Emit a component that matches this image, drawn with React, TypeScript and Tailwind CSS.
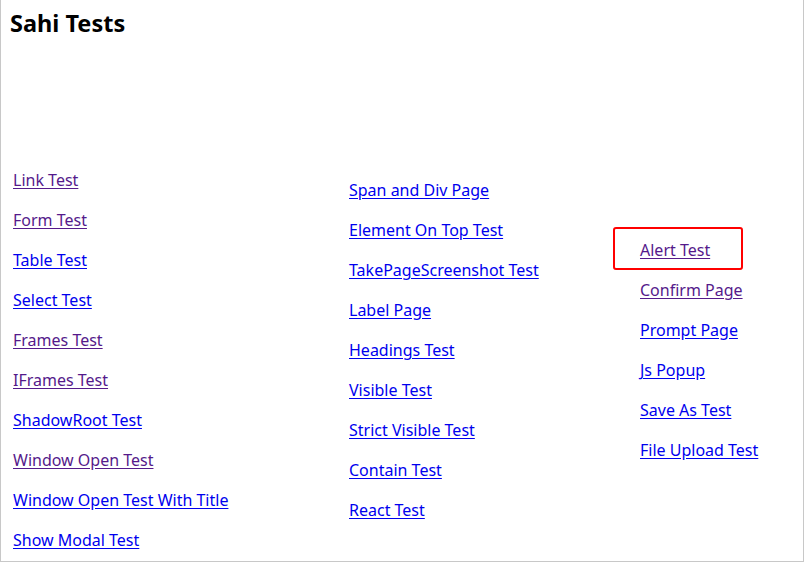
import React from "react";

type L = { t: string; v?: boolean };

const col1: L[] = [
  { t: "Link Test", v: true },
  { t: "Form Test", v: true },
  { t: "Table Test" },
  { t: "Select Test" },
  { t: "Frames Test", v: true },
  { t: "IFrames Test", v: true },
  { t: "ShadowRoot Test" },
  { t: "Window Open Test", v: true },
  { t: "Window Open Test With Title" },
  { t: "Show Modal Test" },
];
const col2: L[] = [
  { t: "Span and Div Page" },
  { t: "Element On Top Test" },
  { t: "TakePageScreenshot Test" },
  { t: "Label Page" },
  { t: "Headings Test" },
  { t: "Visible Test" },
  { t: "Strict Visible Test" },
  { t: "Contain Test" },
  { t: "React Test" },
];
const col3: L[] = [
  { t: "Alert Test", v: true },
  { t: "Confirm Page", v: true },
  { t: "Prompt Page" },
  { t: "Js Popup" },
  { t: "Save As Test" },
  { t: "File Upload Test" },
];

function Item({ l, box }: { l: L; box?: boolean }) {
  return (
    <div className="relative h-[40px] flex items-center">
      {box && (
        <div className="absolute left-[-27px] top-[-3px] w-[130px] h-[43px] border-[2.5px] border-[#ff0000] rounded-[3px]" />
      )}
      <a
        href="#"
        className={
          "underline underline-offset-[2px] whitespace-nowrap leading-[22px] " +
          (l.v ? "text-[#551a8b]" : "text-[#0000ee]")
        }
      >
        {l.t}
      </a>
    </div>
  );
}

export default function App() {
  return (
    <div
      className="w-[804px] h-[562px] bg-white border-l border-r border-b border-[#c8c8c8] overflow-hidden text-[16px] text-black"
      style={{ fontFamily: '"Noto Sans", sans-serif' }}
    >
      <h1 className="pl-[9px] pt-[7px] text-[23.5px] font-bold leading-[32px]">Sahi Tests</h1>
      <div className="flex">
        <div className="w-[348px] pl-[12px] pt-[121px]">
          {col1.map((l) => (
            <Item key={l.t} l={l} />
          ))}
        </div>
        <div className="w-[291px] pt-[131px]">
          {col2.map((l) => (
            <Item key={l.t} l={l} />
          ))}
        </div>
        <div className="pt-[191px]">
          {col3.map((l, i) => (
            <Item key={l.t} l={l} box={i === 0} />
          ))}
        </div>
      </div>
    </div>
  );
}
